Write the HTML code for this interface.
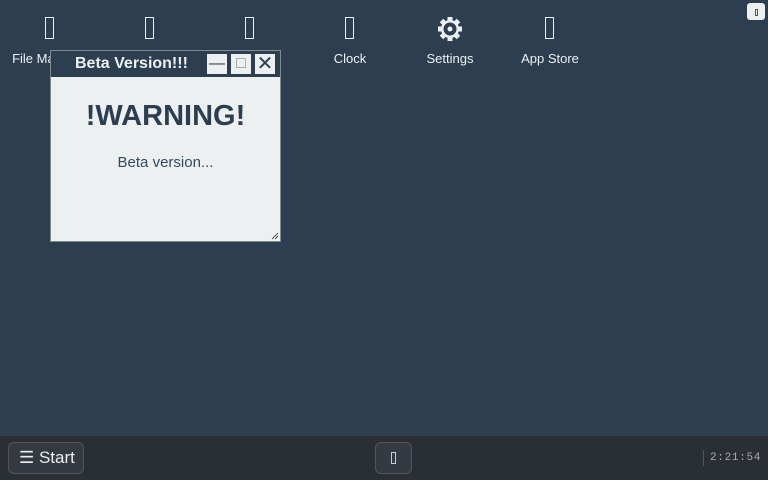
<!DOCTYPE html>
<html><head><style>
*{margin:0;padding:0;box-sizing:border-box}
body{width:768px;height:480px;background:#2c3e50;font-family:"Liberation Sans",sans-serif;position:relative;overflow:hidden;color:#ecf0f1}
.ic{position:absolute;top:10px;width:80px;text-align:center}
.tofu{display:inline-block;width:9px;height:22px;border:1.5px solid #ecf0f1;margin-top:7px}
.lbl{position:absolute;top:51px;font-size:13px;width:100px;text-align:center}
.win{position:absolute;left:50px;top:50px;width:231px;height:192px;background:#ecf0f1;border:1px solid #7f8c8d}
.tb{height:26px;background:#2c3e50;position:relative}
.tt{position:absolute;left:24px;top:4px;font-size:16px;font-weight:bold;color:#ecf0f1}
.btn{position:absolute;top:3px;width:20px;height:20px;background:#ecf0f1;color:#2c3e50;text-align:center;font-size:16px;line-height:20px}
.bar{position:absolute;left:0;top:436px;width:768px;height:44px;background:#2a2e35}
</style></head><body>
<div class="ic" style="left:9px"><span class="tofu"></span></div>
<div class="ic" style="left:109px"><span class="tofu"></span></div>
<div class="ic" style="left:209px"><span class="tofu"></span></div>
<div class="ic" style="left:309px"><span class="tofu"></span></div>
<div class="ic" style="left:410px;top:16px"><svg width="26" height="26" viewBox="0 0 26 26"><g fill="#ecf0f1"><circle cx="13" cy="13" r="9"/><rect x="10.5" y="1" width="5" height="24"/><rect x="1" y="10.5" width="24" height="5"/><rect x="10.5" y="1" width="5" height="24" transform="rotate(45 13 13)"/><rect x="10.5" y="1" width="5" height="24" transform="rotate(-45 13 13)"/></g><circle cx="13" cy="13" r="6.5" fill="#2c3e50"/><circle cx="13" cy="13" r="2.5" fill="#ecf0f1"/></svg></div>
<div class="ic" style="left:509px"><span class="tofu"></span></div>
<div class="lbl" style="left:0">File Manager</div>
<div class="lbl" style="left:300px">Clock</div>
<div class="lbl" style="left:400px">Settings</div>
<div class="lbl" style="left:500px">App Store</div>
<div style="position:absolute;left:747px;top:3px;width:18px;height:17px;background:#ecf0f1;border-radius:3px;text-align:center"><span style="display:inline-block;width:3px;height:7px;border:1px solid #555;margin-top:4px"></span></div>
<div class="win">
<div class="tb"><div class="tt">Beta Version!!!</div>
<div class="btn" style="left:156px">—</div>
<div class="btn" style="left:180px;color:#7f8c8d">□</div>
<div class="btn" style="left:204px;font-size:20px">✕</div></div>
<div style="text-align:center;font-size:29px;font-weight:bold;color:#2c3e50;margin-top:23px">!WARNING!</div>
<div style="text-align:center;font-size:15px;color:#34495e;margin-top:21px">Beta version...</div>
<svg style="position:absolute;right:1px;bottom:1px" width="8" height="8"><path d="M1 7L7 1M4 7L7 4" stroke="#555" stroke-width="1"/></svg>
</div>
<div class="bar">
<div style="position:absolute;left:8px;top:6px;width:76px;height:32px;border:1px solid #555;border-radius:6px;background:#353a42;font-size:17px;line-height:30px;padding-left:10px">☰ Start</div>
<div style="position:absolute;left:375px;top:6px;width:37px;height:32px;border:1px solid #555;border-radius:6px;background:#353a42;text-align:center"><span style="display:inline-block;width:5px;height:12px;border:1px solid #ccc;margin-top:9px"></span></div>
<div style="position:absolute;left:703px;top:14px;height:16px;border-left:1px solid #555"></div>
<div style="position:absolute;left:710px;top:16px;font-family:'Liberation Mono',monospace;font-size:11px;letter-spacing:0.7px;color:#aaa">2:21:54</div>
</div>
</body></html>
